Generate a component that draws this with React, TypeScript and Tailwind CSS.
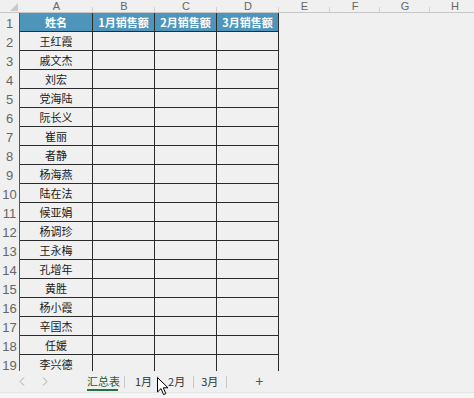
import React from 'react';

const names = [
  '王红霞', '戚文杰', '刘宏', '党海陆', '阮长义', '崔丽', '者静', '杨海燕', '陆在法',
  '候亚娟', '杨调珍', '王永梅', '孔增年', '黄胜', '杨小霞', '辛国杰', '任媛', '李兴德',
];

const cols = ['A', 'B', 'C', 'D', 'E', 'F', 'G', 'H'];
const widths = ['w-[73px]', 'w-[62px]', 'w-[62px]', 'w-[62px]', 'w-[51px]', 'w-[50px]', 'w-[50px]', 'w-[50px]'];
const heads = ['姓名', '1月销售额', '2月销售额', '3月销售额'];

const font = { fontFamily: '"Microsoft YaHei", "Noto Sans CJK SC", "Noto Sans", sans-serif' };
const latin = { fontFamily: '"Liberation Sans", Arial, sans-serif' };

const Cursor = () => (
  <svg width="12" height="19" viewBox="0 0 12 19" className="absolute left-[157px] top-[6px]">
    <path d="M0.5 0.5 L0.5 15 L4 11.6 L6.6 17.6 L8.8 16.6 L6.3 10.8 L11 10.8 Z" fill="#fff" stroke="#000" strokeWidth="1" strokeLinejoin="round" />
  </svg>
);

const Chevron = ({ dir }: { dir: 'l' | 'r' }) => (
  <svg width="6" height="9" viewBox="0 0 6 9">
    <path d={dir === 'l' ? 'M5 0.5 L1 4.5 L5 8.5' : 'M1 0.5 L5 4.5 L1 8.5'} fill="none" stroke="#a8a8a8" strokeWidth="1" />
  </svg>
);

const Sep = ({ cls }: { cls: string }) => <span className={`${cls} w-px h-[12px] bg-[#c8c8c8]`} />;

export default function App() {
  return (
    <div className="w-[474px] h-[398px] overflow-hidden bg-[#f0f0f0] flex flex-col text-[#1a1a1a]" style={font}>
      {/* column letters */}
      <div className="flex h-[13px] shrink-0 border-b border-[#c6c6c6]">
        <div className="w-[20px] shrink-0 relative">
          <svg width="8" height="8" viewBox="0 0 8 8" className="absolute left-[10px] top-[3px]">
            <path d="M8 0 L8 8 L0 8 Z" fill="#c9c9c9" />
          </svg>
        </div>
        {cols.map((c, i) => (
          <div key={c} className={`${widths[i]} shrink-0 flex items-end justify-center relative text-[11px] leading-[12px] text-[#666]`} style={latin}>
            {c}
            <span className="absolute right-0 bottom-0 w-px h-[5px] bg-[#d2d2d2]" />
          </div>
        ))}
      </div>

      {/* rows */}
      <div className="flex-1 min-h-0 overflow-hidden">
        <div className="flex h-[19px]">
          <div className="w-[20px] shrink-0 border-r border-[#555] flex items-end justify-center pb-[2px] text-[13px] leading-[12px] text-[#666]" style={latin}>1</div>
          {heads.map((h, i) => (
            <div key={h} className={`${widths[i]} shrink-0 bg-[#4e95bb] border-r border-b border-[#2b2b2b] flex items-center justify-center text-white font-bold text-[11px]`}>
              {h}
            </div>
          ))}
        </div>
        {names.map((n, r) => (
          <div key={n} className="flex h-[19px]">
            <div className="w-[20px] shrink-0 border-r border-[#555] flex items-end justify-center pb-[2px] text-[13px] leading-[12px] text-[#666]" style={latin}>
              {r + 2}
            </div>
            {[0, 1, 2, 3].map((i) => (
              <div key={i} className={`${widths[i]} shrink-0 border-r border-b border-[#2b2b2b] flex items-center justify-center text-[11px]`}>
                {i === 0 ? n : ''}
              </div>
            ))}
          </div>
        ))}
      </div>

      {/* sheet tabs */}
      <div className="h-[21px] shrink-0 flex items-center relative text-[11px] text-[#333]">
        <span className="ml-[19px]"><Chevron dir="l" /></span>
        <span className="ml-[17px]"><Chevron dir="r" /></span>
        <span className="ml-[39px] relative h-full flex items-center text-[#1f5a36]">
          汇总表
          <span className="absolute left-0 right-[2px] bottom-[1px] h-[2px] bg-[#217346]" />
        </span>
        <Sep cls="ml-[4px]" />
        <span className="ml-[10px]">1月</span>
        <Sep cls="ml-[5px]" />
        <span className="ml-[10px]">2月</span>
        <Sep cls="ml-[8px]" />
        <span className="ml-[7px]">3月</span>
        <Sep cls="ml-[8px]" />
        <span className="ml-[28px] text-[14px] text-[#555]" style={latin}>+</span>
        <Cursor />
      </div>
      <div className="h-[6px] shrink-0 bg-[#f5f5f5] border-t border-[#e4e4e4]" />
    </div>
  );
}
